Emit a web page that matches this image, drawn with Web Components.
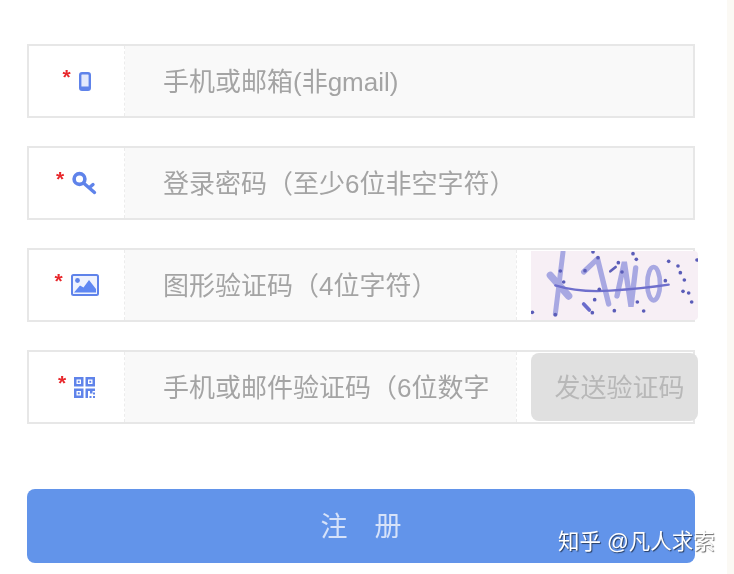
<!DOCTYPE html>
<html lang="zh">
<head>
<meta charset="utf-8">
<title>注册</title>
<style>
    html, body { margin: 0; height: 100%; background: #fbf9f4; overflow: hidden; }
    body { font-family: "Liberation Sans", "Noto Sans CJK SC", sans-serif; }
</style>
</head>
<body>
<signup-page>
    <form-row hint="手机或邮箱(非gmail)">
        <field-icon slot="icon" name="phone"></field-icon>
    </form-row>
    <form-row hint="登录密码（至少6位非空字符）">
        <field-icon slot="icon" name="key"></field-icon>
    </form-row>
    <form-row hint="图形验证码（4位字符）">
        <field-icon slot="icon" name="picture"></field-icon>
        <captcha-image slot="addon"></captcha-image>
    </form-row>
    <form-row hint="手机或邮件验证码（6位数字">
        <field-icon slot="icon" name="qr"></field-icon>
        <send-button slot="addon">发送验证码</send-button>
    </form-row>
    <submit-button>注　册</submit-button>
</signup-page>
<script>
class SignupPage extends HTMLElement {
    constructor() {
        super()
        this.attachShadow({ mode: 'open' }).innerHTML = `
            <style>
                :host { display: block; position: relative; width: 727px; height: 574px; background: #fff; filter: blur(.35px); }
                .form { display: flex; flex-direction: column; gap: 28px; width: 668px; padding: 44px 0 0 27px; }
                .mark {
                    position: absolute; left: 558px; top: 526px;
                    font-size: 21.5px; line-height: 32px; color: #fff; white-space: nowrap;
                    text-shadow: 1px 1px 1px rgba(0, 0, 0, .6);
                }
            </style>
            <div class="form"><slot></slot></div>
            <div class="mark">知乎 @凡人求索</div>`
    }
}

class FormRow extends HTMLElement {
    constructor() {
        super()
        this.attachShadow({ mode: 'open' }).innerHTML = `
            <style>
                :host { display: flex; box-sizing: border-box; height: 74px; border: 2px solid #e7e7e7; background: #fff; }
                .icon { display: flex; align-items: center; justify-content: center; flex: none; width: 95px; border-right: 1px dashed #ececec; }
                .hint {
                    flex: 1; min-width: 0; display: flex; align-items: center; box-sizing: border-box; padding: 0 0 4px 38px;
                    background: #f9f9f9; color: #a4a4a4; font-size: 26px; white-space: nowrap;
                }
                .addon { display: none; flex: none; box-sizing: border-box; width: 178px; margin-right: -1px; padding: 1px 0 0 14px; border-left: 1px dashed #ececec; }
                :host([has-addon]) .addon { display: block; }
            </style>
            <div class="icon"><slot name="icon"></slot></div>
            <div class="hint"><span></span></div>
            <div class="addon"><slot name="addon"></slot></div>`
    }

    connectedCallback() {
        this.shadowRoot.querySelector('.hint span').textContent = this.getAttribute('hint')
        if (this.querySelector('[slot=addon]')) this.setAttribute('has-addon', '')
    }
}

const ICONS = {
    phone: `<svg width="12" height="19" viewBox="0 0 12 19">
        <rect x="1.2" y="1.2" width="9.6" height="16.6" rx="1.8" fill="#e3e9fc" stroke="#5f83ea" stroke-width="2.4"/>
        <rect x="1" y="14.5" width="10" height="3.5" fill="#5f83ea"/>
    </svg>`,
    key: `<svg width="25" height="24" viewBox="0 0 25 24" fill="none" stroke="#5f83ea" stroke-linecap="round">
        <circle cx="7.5" cy="8" r="5.4" stroke-width="3.6"/>
        <path d="M11.5 12 L22.5 21.5 M17.5 16.5 L21 13.5" stroke-width="3.4"/>
    </svg>`,
    picture: `<svg width="28" height="22" viewBox="0 0 28 22">
        <rect x="1" y="1" width="26" height="20" rx="1.5" fill="#eef2fe" stroke="#5f83ea" stroke-width="2"/>
        <circle cx="6.5" cy="6.5" r="2.4" fill="#5f83ea"/>
        <path d="M3 18.5 L9 11.5 L12.5 13.5 L18 6 L25 15 V18.5 Z" fill="#5f87f2"/>
    </svg>`,
    qr: `<svg width="21" height="21" viewBox="0 0 21 21" fill="#5f83ea">
        <path fill-rule="evenodd" d="M0 0H9.5V9.5H0Z M2.5 2.5V7H7V2.5Z M11.5 0H21V9.5H11.5Z M14 2.5V7H18.5V2.5Z M0 11.5H9.5V21H0Z M2.5 14V18.5H7V14Z"/>
        <path d="M3.8 3.8H5.7V5.7H3.8Z M15.3 3.8H17.2V5.7H15.3Z M3.8 15.3H5.7V17.2H3.8Z"/>
        <path d="M11.5 11.5H14V21H11.5Z M14 11.5H21V14H18.5V16.5H16V14H14Z M19 15.5H21V17.5H19Z M15.5 19H17.5V21H15.5Z M19 19H21V21H19Z"/>
    </svg>`
}

class FieldIcon extends HTMLElement {
    constructor() {
        super()
        this.attachShadow({ mode: 'open' })
    }

    connectedCallback() {
        this.shadowRoot.innerHTML = `
            <style>
                :host { display: flex; align-items: center; gap: 8px; }
                .star { color: #e8282c; font-size: 21px; font-weight: bold; line-height: 16px; height: 14px; margin-top: -11px; }
                svg { display: block; }
            </style>
            <span class="star">*</span>${ICONS[this.getAttribute('name')]}`
    }
}

// captcha coordinates follow a 3x crop of the picture, hence the odd viewBox
const CAPTCHA_DOTS = [
    [180,97],[190,130],[254,96],[278,40],[293,57],[365,100],[354,72],[398,45],[408,62],[505,68],
    [533,82],[540,102],[552,124],[548,158],[565,163],[574,190],[590,64],[495,126],[297,152],[283,183],
    [276,222],[342,216],[411,190],[430,217],[96,221],[165,228]
]

class CaptchaImage extends HTMLElement {
    constructor() {
        super()
        const dots = CAPTCHA_DOTS.map(([x, y]) => `<circle cx="${x}" cy="${y}" r="5.5"/>`).join('')
        this.attachShadow({ mode: 'open' }).innerHTML = `
            <style>
                :host { display: block; width: 167px; height: 69px; background: #f7eff5; border-radius: 0 4px 4px 0; }
                svg { display: block; filter: blur(.6px); }
            </style>
            <svg width="167" height="69" viewBox="92 37 501 207" fill="none" stroke-linecap="round">
                <g stroke="#a8a8e2">
                    <path d="M188 40 L165 226" stroke-width="15"/>
                    <path d="M150 110 L205 172" stroke-width="22"/>
                    <path d="M290 62 L250 100 M292 62 L325 196" stroke-width="16"/>
                    <path d="M350 172 L372 70 L392 204 L406 88" stroke-width="16"/>
                    <ellipse cx="460" cy="135" rx="19" ry="50" stroke-width="14"/>
                </g>
                <path d="M165 140 Q235 162 330 156 T505 138" stroke="#6f6fcc" stroke-width="7"/>
                <path d="M250 196 L267 214" stroke="#6a6ccb" stroke-width="11"/>
                <path d="M330 98 L346 85" stroke="#5f5fb8" stroke-width="8"/>
                <g fill="#5a5cb8">${dots}</g>
            </svg>`
    }
}

class SendButton extends HTMLElement {
    constructor() {
        super()
        this.attachShadow({ mode: 'open' }).innerHTML = `
            <style>
                :host {
                    display: flex; align-items: center; justify-content: center; box-sizing: border-box; width: 167px; height: 68px;
                    padding: 0 0 4px 10px;
                    background: #e0e0e0; border-radius: 8px; color: #b8b8b8; font-size: 26px; white-space: nowrap;
                }
            </style>
            <slot></slot>`
    }
}

class SubmitButton extends HTMLElement {
    constructor() {
        super()
        this.attachShadow({ mode: 'open' }).innerHTML = `
            <style>
                :host {
                    display: flex; align-items: center; justify-content: center; box-sizing: border-box; height: 74px; margin-top: 37px;
                    padding-bottom: 4px;
                    background: #6294ea; border-radius: 8px; color: #d6e2f9; font-size: 27px;
                }
            </style>
            <slot></slot>`
    }
}

customElements.define('signup-page', SignupPage)
customElements.define('form-row', FormRow)
customElements.define('field-icon', FieldIcon)
customElements.define('captcha-image', CaptchaImage)
customElements.define('send-button', SendButton)
customElements.define('submit-button', SubmitButton)
</script>
</body>
</html>
